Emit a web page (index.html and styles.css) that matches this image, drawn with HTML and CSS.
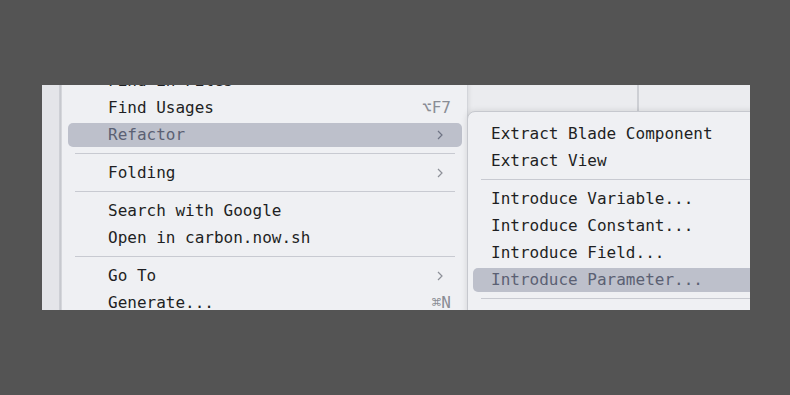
FILE: index.html
```html
<!DOCTYPE html>
<html>
<head>
<meta charset="utf-8">
<link rel="stylesheet" href="styles.css">
</head>
<body>
<div class="stage">
  <div class="shot">
    <div class="strip"></div>
    <div class="divider"></div>
    <div class="menu">
      <div class="list main">
        <div class="item"><span class="label">Find in Files</span></div>
        <div class="item"><span class="label">Find Usages</span><span class="key">⌥F7</span></div>
        <div class="item active"><span class="label">Refactor</span><svg class="chev" width="6" height="10" viewBox="0 0 6 10"><polyline points="1,1 5,5 1,9" fill="none" stroke="currentColor" stroke-width="1.2"/></svg></div>
        <div class="sep"></div>
        <div class="item"><span class="label">Folding</span><svg class="chev" width="6" height="10" viewBox="0 0 6 10"><polyline points="1,1 5,5 1,9" fill="none" stroke="currentColor" stroke-width="1.2"/></svg></div>
        <div class="sep"></div>
        <div class="item"><span class="label">Search with Google</span></div>
        <div class="item"><span class="label">Open in carbon.now.sh</span></div>
        <div class="sep"></div>
        <div class="item"><span class="label">Go To</span><svg class="chev" width="6" height="10" viewBox="0 0 6 10"><polyline points="1,1 5,5 1,9" fill="none" stroke="currentColor" stroke-width="1.2"/></svg></div>
        <div class="item"><span class="label">Generate...</span><span class="key">⌘N</span></div>
      </div>
    </div>
    <div class="right">
      <div class="pane"></div>
    </div>
    <div class="submenu">
      <div class="list sub">
        <div class="item"><span class="label">Extract Blade Component</span></div>
        <div class="item"><span class="label">Extract View</span></div>
        <div class="sep"></div>
        <div class="item"><span class="label">Introduce Variable...</span></div>
        <div class="item"><span class="label">Introduce Constant...</span></div>
        <div class="item"><span class="label">Introduce Field...</span></div>
        <div class="item active"><span class="label">Introduce Parameter...</span></div>
        <div class="sep"></div>
        <div class="item"><span class="label">Extract Method...</span></div>
      </div>
    </div>
  </div>
</div>
</body>
</html>
```

FILE: styles.css
```css
html, body {
  margin: 0;
  padding: 0;
  background: #545454;
}

.stage {
  padding: 85px 0 0 42px;
  height: 395px;
  box-sizing: border-box;
}

.shot {
  position: relative;
  width: 708px;
  height: 225px;
  overflow: hidden;
  display: flex;
  background: #ecedf0;
  font-family: "DejaVu Sans Mono", "Liberation Mono", monospace;
  font-size: 16px;
  color: #1e1f23;
}

.strip {
  width: 17px;
  flex: none;
  background: #e4e5e9;
}

.divider {
  width: 3px;
  flex: none;
  background: linear-gradient(to right, #d4d6db, #c3c5cb 40%, #dcdde1);
}

.menu {
  width: 405px;
  flex: none;
  background: #eff0f3;
  border-right: 1px solid #d3d5da;
}

.list {
  display: flex;
  flex-direction: column;
  gap: 3px;
}

.main {
  margin-top: -16px;
  padding: 0 5px 0 6px;
}

.item {
  height: 24px;
  line-height: 24px;
  display: flex;
  align-items: center;
  border-radius: 5px;
  white-space: nowrap;
}

.main .item {
  padding: 0 11px 0 40px;
}

.label {
  flex: 1;
}

.item.active {
  background: #bdc0cb;
  color: #5b6073;
}

.key {
  color: #8a8d95;
}

.chev {
  color: #8d9098;
  margin-right: 8px;
}

.item.active .chev {
  color: #6e7384;
}

.sep {
  height: 1px;
  background: #c8cad1;
  margin: 3px 0 4px;
}

.main .sep {
  margin-left: 7px;
  margin-right: 7px;
}

.right {
  flex: 1;
  background: #ebecef;
  box-shadow: inset 4px 0 4px -3px rgba(0, 0, 0, 0.08);
}

.pane {
  width: 169px;
  height: 100%;
  border-right: 2px solid #cdcfd4;
}

.submenu {
  position: absolute;
  left: 425px;
  top: 26px;
  width: 330px;
  height: 260px;
  background: #eff0f3;
  border: 1px solid #c6c8ce;
  border-radius: 8px;
  box-shadow: 0 0 6px rgba(0, 0, 0, 0.12);
}

.sub {
  padding: 10px 0 0 5px;
}

.sub .item {
  padding: 0 10px 0 18px;
}

.sub .sep {
  margin-left: 8px;
}
```
